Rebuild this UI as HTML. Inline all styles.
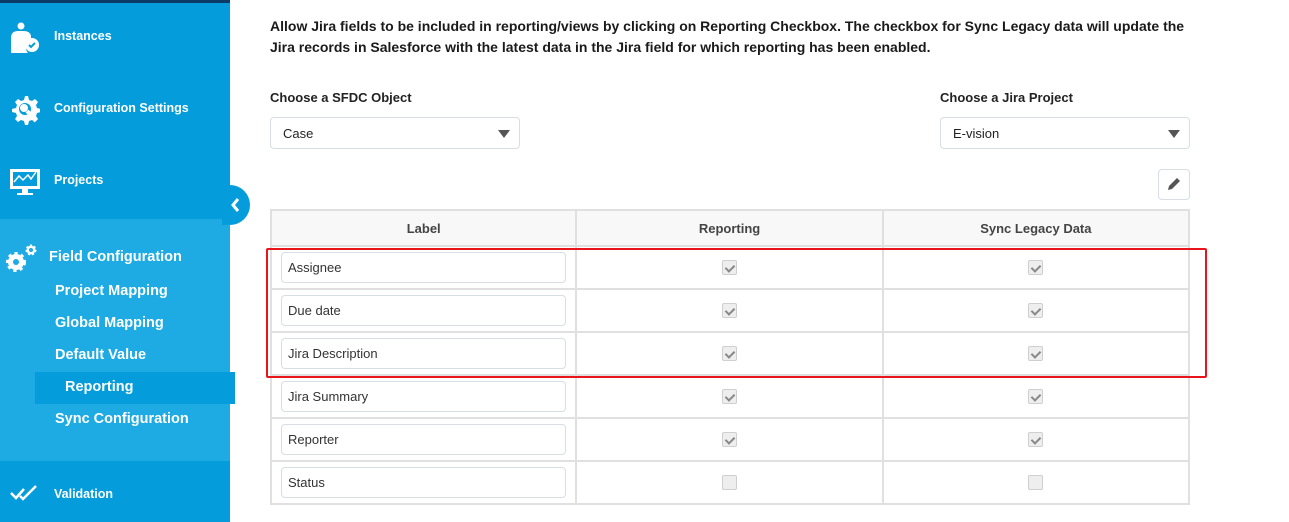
<!DOCTYPE html>
<html><head><meta charset="utf-8"><style>
*{box-sizing:border-box;margin:0;padding:0}
body{width:1289px;height:522px;overflow:hidden;background:#fff;font-family:"Liberation Sans",sans-serif;position:relative}
.sb{position:absolute;left:0;top:0;width:230px;height:522px;background:#049cdb}
.top{position:absolute;left:0;top:0;width:230px;height:3px;background:#0b3b66}
.fc{position:absolute;left:0;top:219px;width:230px;height:242px;background:#1eaae2}
.it{position:absolute;color:#fff;font-size:12.5px;font-weight:bold}
.sub{position:absolute;color:#fff;font-size:14.5px;font-weight:bold}
.rep{position:absolute;left:35px;top:372px;width:200px;height:32px;background:#049cdb}
.tog{position:absolute;left:222px;top:185px;width:28px;height:40px;border-radius:0 20px 20px 0;background:#049cdb}
.txt{position:absolute;left:270px;color:#1a1a1a;font-size:14px;font-weight:bold;white-space:nowrap}
.lbl{position:absolute;color:#222;font-size:13px;font-weight:bold}
.sel{position:absolute;height:32px;width:250px;border:1px solid #d8dde6;border-radius:4px;font-size:13px;color:#222;padding:8px 12px;}
.sel:after{content:"";position:absolute;right:9px;top:12px;border-left:6px solid transparent;border-right:6px solid transparent;border-top:8px solid #555}
table{position:absolute;left:270px;top:209px;width:920px;border-collapse:collapse}
td,th{border:2px solid #e0e0e0;height:43px}
th{height:36px;background:#f8f8f8;font-size:13px;color:#444;font-weight:bold}
td.l{width:306px;padding:0 9px}
td.c{width:307px;text-align:center}
.in{height:31px;border:1px solid #d8dde6;border-radius:4px;font-size:13px;color:#333;padding:7px 6px}
.cb{display:inline-block;width:15px;height:15px;border:1px solid #cfcfcf;background:#eee;border-radius:2px;vertical-align:middle;position:relative}
.cb.k:after{content:"";position:absolute;left:4px;top:2px;width:4px;height:7px;border-right:2px solid #888;border-bottom:2px solid #888;transform:rotate(45deg)}
.red{position:absolute;left:266px;top:248px;width:941px;height:130px;border:2px solid #e8161b;border-radius:2px}
.pen{position:absolute;left:1158px;top:169px;width:32px;height:31px;border:1px solid #d8dde6;border-radius:4px}
</style></head><body>
<div class="sb"></div><div class="top"></div>
<div class="fc"></div>
<div class="rep"></div>
<svg style="position:absolute;left:10px;top:22px" width="32" height="32" viewBox="0 0 32 32"><circle cx="11" cy="4" r="3.5" fill="#fff"/><path d="M1 31V16q0-7 7-7h6q6 0 7 5v4a8 8 0 0 0-3 13z" fill="#fff"/><circle cx="22" cy="23" r="7" fill="#fff"/><path d="M19 23l2 2 4-4" stroke="#049cdb" stroke-width="2" fill="none"/></svg>
<div class="it" style="left:54px;top:29px">Instances</div>
<svg style="position:absolute;left:10px;top:94px" width="30" height="32" viewBox="0 0 30 32"><path d="M15 2l3 0 1 4 3 1 3-2 3 3-2 3 1 3 4 1v3l-4 1-1 3 2 3-3 3-3-2-3 1-1 4h-3l-1-4-3-1-3 2-3-3 2-3-1-3-4-1v-3l4-1 1-3-2-3 3-3 3 2 3-1z" fill="#fff"/><circle cx="15" cy="15" r="6" fill="#049cdb"/><circle cx="14" cy="14" r="4" fill="#fff"/><path d="M17 17l9 10" stroke="#fff" stroke-width="4"/></svg>
<div class="it" style="left:54px;top:101px">Configuration Settings</div>
<svg style="position:absolute;left:10px;top:166px" width="30" height="32" viewBox="0 0 30 32"><rect x="0" y="3" width="30" height="20" fill="#fff"/><rect x="3" y="6" width="24" height="14" fill="#049cdb"/><path d="M4 16l5-6 4 4 5-5 3 4 5-7" stroke="#fff" stroke-width="1.5" fill="none"/><rect x="12" y="23" width="6" height="4" fill="#fff"/><rect x="7" y="27" width="16" height="2" fill="#fff"/></svg>
<div class="it" style="left:54px;top:173px">Projects</div>
<div class="tog"><svg width="28" height="40"><path d="M16 14l-5 6 5 6" stroke="#fff" stroke-width="3" fill="none"/></svg></div>
<svg style="position:absolute;left:4px;top:242px" width="34" height="32" viewBox="0 0 34 32"><circle cx="12" cy="20" r="8" fill="#fff" stroke="#fff" stroke-width="4" stroke-dasharray="3 3"/><circle cx="12" cy="20" r="3" fill="#1eaae2"/><circle cx="27" cy="8" r="4.5" fill="#fff" stroke="#fff" stroke-width="2" stroke-dasharray="2 2"/><circle cx="27" cy="8" r="2" fill="#1eaae2"/></svg>
<div class="sub" style="left:49px;top:249px">Field Configuration</div>
<div class="sub" style="left:55px;top:283px">Project Mapping</div>
<div class="sub" style="left:55px;top:315px">Global Mapping</div>
<div class="sub" style="left:55px;top:347px">Default Value</div>
<div class="sub" style="left:65px;top:379px">Reporting</div>
<div class="sub" style="left:55px;top:411px">Sync Configuration</div>
<svg style="position:absolute;left:10px;top:484px" width="30" height="20"><path d="M1 9l5 5 8-9M10 12l3 3 13-13" stroke="#fff" stroke-width="2.5" fill="none"/></svg>
<div class="it" style="left:54px;top:487px">Validation</div>

<div class="txt" style="top:18px">Allow Jira fields to be included in reporting/views by clicking on Reporting Checkbox. The checkbox for Sync Legacy data will update the</div>
<div class="txt" style="top:39px">Jira records in Salesforce with the latest data in the Jira field for which reporting has been enabled.</div>
<div class="lbl" style="left:270px;top:90px">Choose a SFDC Object</div>
<div class="lbl" style="left:940px;top:90px">Choose a Jira Project</div>
<div class="sel" style="left:270px;top:117px">Case</div>
<div class="sel" style="left:940px;top:117px">E-vision</div>
<div class="pen"><svg width="30" height="29"><path d="M9 20l1-4 8-8 3 3-8 8z" fill="#555"/></svg></div>
<table>
<tr><th>Label</th><th>Reporting</th><th>Sync Legacy Data</th></tr>
<tr><td class="l"><div class="in">Assignee</div></td><td class="c"><span class="cb k"></span></td><td class="c"><span class="cb k"></span></td></tr>
<tr><td class="l"><div class="in">Due date</div></td><td class="c"><span class="cb k"></span></td><td class="c"><span class="cb k"></span></td></tr>
<tr><td class="l"><div class="in">Jira Description</div></td><td class="c"><span class="cb k"></span></td><td class="c"><span class="cb k"></span></td></tr>
<tr><td class="l"><div class="in">Jira Summary</div></td><td class="c"><span class="cb k"></span></td><td class="c"><span class="cb k"></span></td></tr>
<tr><td class="l"><div class="in">Reporter</div></td><td class="c"><span class="cb k"></span></td><td class="c"><span class="cb k"></span></td></tr>
<tr><td class="l"><div class="in">Status</div></td><td class="c"><span class="cb"></span></td><td class="c"><span class="cb"></span></td></tr>
</table>
<div class="red"></div>
</body></html>
